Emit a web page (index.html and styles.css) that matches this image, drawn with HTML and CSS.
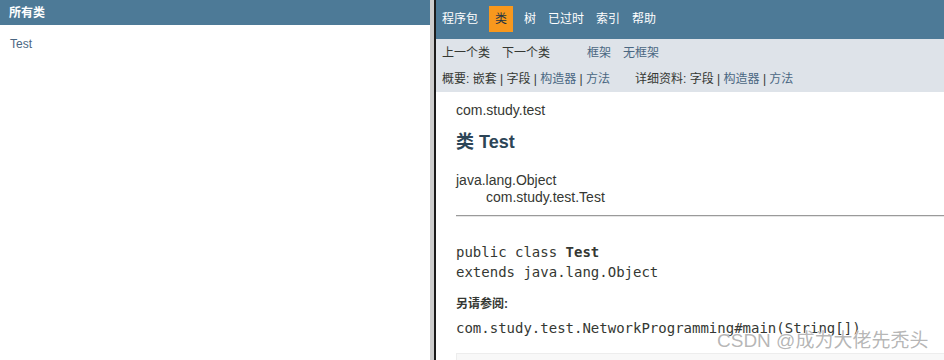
FILE: index.html
```html
<!DOCTYPE html>
<html lang="zh">
<head>
  <meta charset="UTF-8" />
  <title>Test</title>
  <link rel="stylesheet" href="styles.css">
</head>
<body>
  <div class="frames">
    <div class="all-classes">
      <h1 class="bar">所有类</h1>
      <ul class="class-list">
        <li><a href="#">Test</a></li>
      </ul>
    </div>
    <div class="splitter"></div>
    <div class="class-frame">
      <div class="top-nav">
        <ul class="nav-list">
          <li><a href="#">程序包</a></li>
          <li class="nav-cell-rev">类</li>
          <li><a href="#">树</a></li>
          <li><a href="#">已过时</a></li>
          <li><a href="#">索引</a></li>
          <li><a href="#">帮助</a></li>
        </ul>
      </div>
      <div class="sub-nav">
        <div class="sub-row first">
          <span class="item">上一个类</span>
          <span class="item">下一个类</span>
          <a class="item frames-link" href="#">框架</a>
          <a class="item" href="#">无框架</a>
        </div>
        <div class="sub-row">
          <span>概要:&nbsp;嵌套&nbsp;|&nbsp;字段&nbsp;|&nbsp;<a href="#">构造器</a>&nbsp;|&nbsp;<a href="#">方法</a></span>
          <span class="detail">详细资料:&nbsp;字段&nbsp;|&nbsp;<a href="#">构造器</a>&nbsp;|&nbsp;<a href="#">方法</a></span>
        </div>
      </div>
      <div class="content">
        <div class="sub-title">com.study.test</div>
        <h2 class="title">类 Test</h2>
        <div class="inheritance">
          <div>java.lang.Object</div>
          <div class="child">com.study.test.Test</div>
        </div>
        <hr>
        <pre class="decl">public class <b>Test</b>
extends java.lang.Object</pre>
        <div class="see-label">另请参阅:</div>
        <div class="see-item">com.study.test.NetworkProgramming#main(String[])</div>
        <div class="summary-box"></div>
        <div class="watermark">CSDN @成为大佬先秃头</div>
      </div>
    </div>
  </div>
</body>
</html>
```

FILE: styles.css
```css
body {
  margin: 0;
  font-family: "Liberation Sans", "Noto Sans CJK SC", sans-serif;
  color: #353833;
  background-color: #ffffff;
}

a {
  color: #4a6782;
  text-decoration: none;
}

.frames {
  display: flex;
  height: 360px;
  overflow: hidden;
}

/* left frame */
.all-classes {
  width: 430px;
  flex-shrink: 0;
}

.bar {
  margin: 0;
  height: 25px;
  line-height: 26px;
  padding-left: 9px;
  background-color: #4d7a97;
  color: white;
  font-size: 12px;
  font-weight: bold;
}

.class-list {
  list-style: none;
  margin: 0;
  padding: 11px 0 0 10px;
  font-size: 12px;
  line-height: 16px;
}

.splitter {
  width: 4px;
  flex-shrink: 0;
  background-color: #cdcdcd;
  border-right: 2px solid #1c1c1c;
}

/* right frame */
.class-frame {
  flex: 1;
  position: relative;
  min-width: 0;
}

.top-nav {
  height: 39px;
  background-color: #4d7a97;
  box-sizing: border-box;
  padding-top: 6px;
}

.nav-list {
  display: flex;
  list-style: none;
  margin: 0;
  padding: 0;
  font-size: 12px;
  line-height: 16px;
}

.nav-list li {
  padding: 5px 6px;
}

.nav-list a {
  color: white;
}

.nav-cell-rev {
  background-color: #f8981d;
  color: #253441;
  margin: 0 5px;
}

.sub-nav {
  background-color: #dee3e9;
  font-size: 12px;
  padding-left: 6px;
}

.sub-row {
  display: flex;
  line-height: 25px;
}

.sub-row.first {
  line-height: 28px;
}

.sub-row .item {
  margin-right: 12px;
}

.frames-link {
  margin-left: 25px;
}

.detail {
  margin-left: 25px;
}

.content {
  padding: 10px 0 0 20px;
}

.sub-title {
  font-size: 14px;
  line-height: 17px;
}

.title {
  margin: 13px 0 0;
  font-size: 18px;
  line-height: 21px;
  color: #2c4557;
}

.inheritance {
  margin-top: 19px;
  font-size: 14px;
  line-height: 17px;
}

.inheritance .child {
  padding-left: 30px;
}

hr {
  margin: 9px 0 0;
  border: none;
  border-top: 1px solid #9a9a9a;
  border-bottom: 1px solid #e6e6e6;
}

.decl {
  margin: 25px 0 0;
  font-family: "DejaVu Sans Mono", monospace;
  font-size: 14px;
  line-height: 20px;
  color: #353833;
}

.see-label {
  margin-top: 15px;
  font-size: 12px;
  font-weight: bold;
  line-height: 15px;
}

.see-item {
  margin-top: 6px;
  font-family: "DejaVu Sans Mono", monospace;
  font-size: 14px;
  line-height: 20px;
}

.summary-box {
  margin-top: 15px;
  height: 40px;
  background-color: #f8f8f8;
  border: 1px solid #ededed;
  border-right: none;
}

.watermark {
  position: absolute;
  left: 281px;
  top: 329px;
  font-size: 19px;
  line-height: 24px;
  color: rgba(120, 120, 120, 0.55);
  text-shadow: 0 0 1px white, 0 0 1px white;
  white-space: nowrap;
}
```
